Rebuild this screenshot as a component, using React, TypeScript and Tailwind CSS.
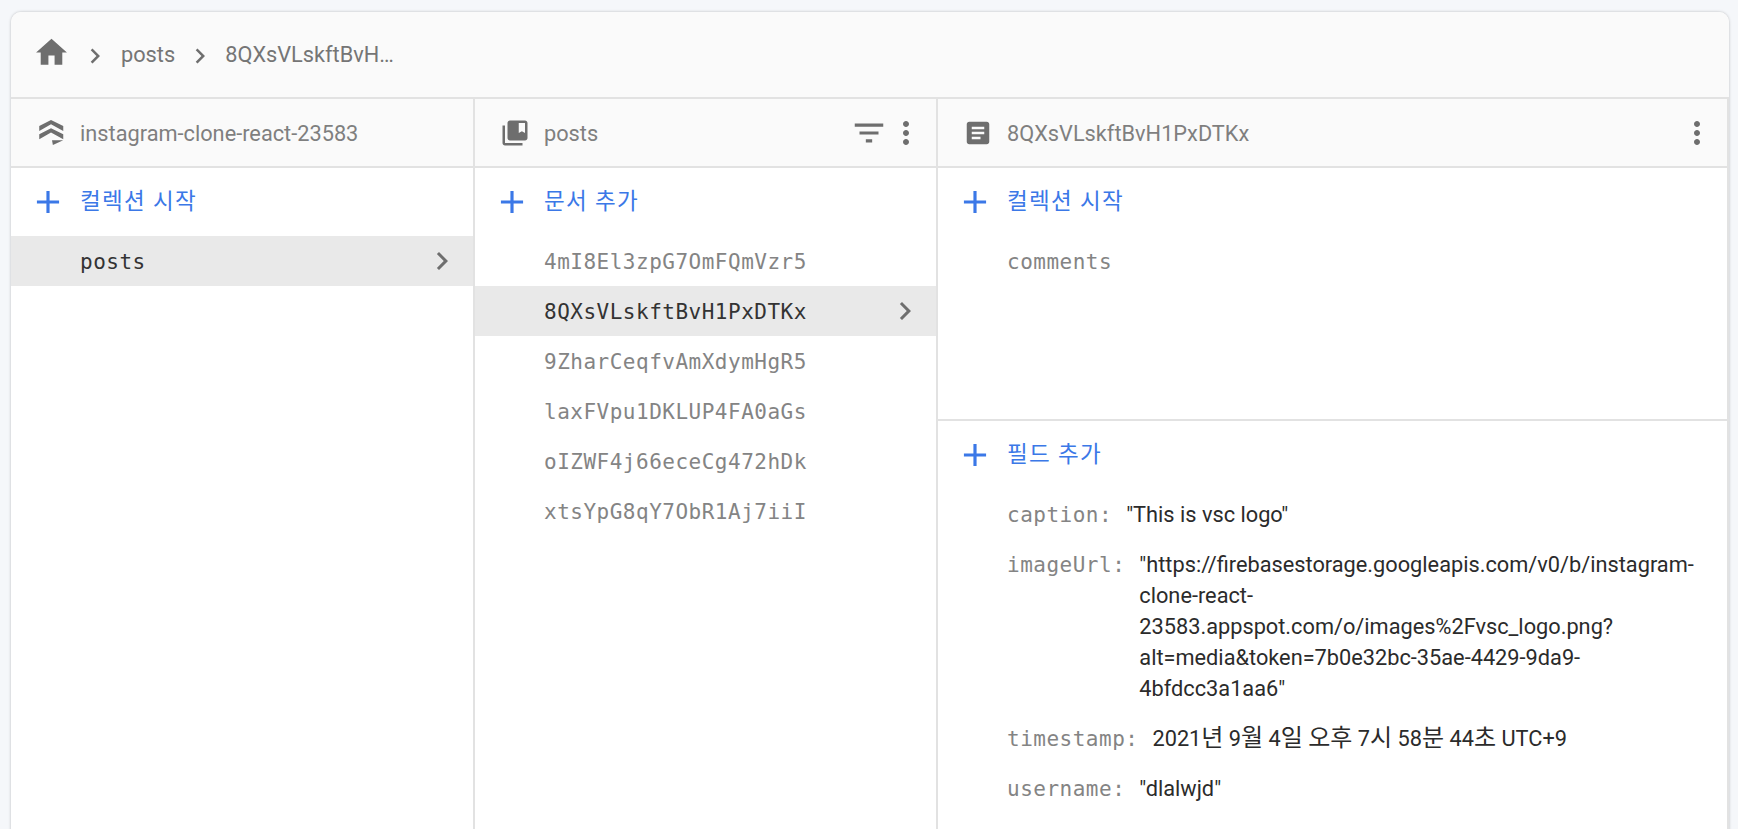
const P = {
  home: "M10 20v-6h4v6h5v-8h3L12 3 2 12h3v8z",
  chev: "M10 6L8.59 7.41 13.17 12l-4.58 4.59L10 18l6-6z",
  add: "M19 13h-6v6h-2v-6H5v-2h6V5h2v6h6v2z",
  more: "M12 8c1.1 0 2-.9 2-2s-.9-2-2-2-2 .9-2 2 .9 2 2 2zm0 2c-1.1 0-2 .9-2 2s.9 2 2 2 2-.9 2-2-.9-2-2-2zm0 6c-1.1 0-2 .9-2 2s.9 2 2 2 2-.9 2-2-.9-2-2-2z",
  filter: "M10 18h4v-2h-4v2zM3 6v2h18V6H3zm3 7h12v-2H6v2z",
  coll: "M4 6H2v14c0 1.1.9 2 2 2h14v-2H4V6zM20 2H8c-1.1 0-2 .9-2 2v12c0 1.1.9 2 2 2h12c1.1 0 2-.9 2-2V4c0-1.1-.9-2-2-2zm0 10l-2.5-1.5L15 12V4h5v8z",
  article: "M19 3H5c-1.1 0-2 .9-2 2v14c0 1.1.9 2 2 2h14c1.1 0 2-.9 2-2V5c0-1.1-.9-2-2-2zm-5 14H7v-2h7v2zm3-4H7v-2h10v2zm0-4H7V7h10v2z",
  stack: "M12 1.6L21.8 6.4V10.4L12 5L2.6 10.4V6.4zM12 8.2L21.8 13V17L12 11.6L2.6 17V13zM12.8 17.8H21.8L13.5 21.5z",
};

function Icon({ d, className }: { d: string; className: string }) {
  return (
    <svg viewBox="0 0 24 24" className={className} fill="currentColor">
      <path d={d} />
    </svg>
  );
}

function ColHeader({ icon, title, right }: { icon: string; title: string; right?: React.ReactNode }) {
  return (
    <div className="h-[69px] shrink-0 flex items-center pl-[25px] pr-[12px] bg-[#fafafa] border-b-2 border-[#e2e2e2]">
      <Icon d={icon} className="w-[30px] h-[30px] text-[#6e6e6e] shrink-0" />
      <span className="ml-[14px] pt-[4px] text-[21.75px] text-[#7f7f7f]">{title}</span>
      <div className="ml-auto flex items-center">{right}</div>
    </div>
  );
}

function AddRow({ label }: { label: string }) {
  return (
    <div className="h-[68px] shrink-0 flex items-center pl-[18px]">
      <Icon d={P.add} className="w-[38px] h-[38px] text-[#3b78e7] shrink-0" />
      <span className="ml-[13px] text-[22.5px] text-[#3b78e7] tracking-[1.3px]">{label}</span>
    </div>
  );
}

const mono = "font-['DejaVu_Sans_Mono',monospace]";

function Row({ label, active }: { label: string; active?: boolean }) {
  return (
    <div className={`h-[50px] flex items-center pl-[69px] pr-[13px] ${active ? "bg-[#e9e9e9] text-[#333]" : "text-[#848484]"}`}>
      <span className={`${mono} pt-[4px] text-[21px] tracking-[0.5px]`}>{label}</span>
      {active && <Icon d={P.chev} className="ml-auto w-[36px] h-[36px] text-[#6e6e6e]" />}
    </div>
  );
}

function Field({ name, children }: { name: string; children: React.ReactNode }) {
  return (
    <div className="flex items-start mb-[19px] pl-[69px] pr-[30px]">
      <span className={`${mono} pt-[2px] text-[21px] leading-[29px] tracking-[0.5px] text-[#848484] shrink-0 mr-[14px]`}>{name}</span>
      <span className="text-[21.75px] leading-[31px] text-[#2b2b2b] break-words min-w-0">{children}</span>
    </div>
  );
}

function Ko({ children }: { children: React.ReactNode }) {
  return <span className="text-[24px] leading-[24px]">{children}</span>;
}

export default function App() {
  return (
    <div className="h-[829px] overflow-hidden bg-[#f5f7fa] pt-[12px] pl-[11px] pr-[9px] font-['Roboto','Noto_Sans_CJK_KR',sans-serif]">
      <div className="h-[900px] bg-white rounded-t-[10px] shadow-[0_0_3px_rgba(0,0,0,0.25)] overflow-hidden flex flex-col">
        <div className="h-[87px] shrink-0 flex items-center bg-[#fafafa] border-b-2 border-[#e2e2e2] pl-[22px] text-[21.75px] text-[#757575]">
          <Icon d={P.home} className="w-[37px] h-[37px] text-[#6e6e6e] shrink-0 mb-[5px]" />
          <Icon d={P.chev} className="ml-[10px] mt-[2px] w-[30px] h-[30px] text-[#6e6e6e] shrink-0" />
          <span className="ml-[11px] pt-[2px]">posts</span>
          <Icon d={P.chev} className="ml-[10px] mt-[2px] w-[30px] h-[30px] text-[#6e6e6e] shrink-0" />
          <span className="ml-[10px] pt-[2px]">8QXsVLskftBvH…</span>
        </div>
        <div className="flex-1 flex">
          <div className="w-[464px] shrink-0 border-r-2 border-[#e2e2e2] flex flex-col">
            <ColHeader icon={P.stack} title="instagram-clone-react-23583" />
            <AddRow label="컬렉션 시작" />
            <Row label="posts" active />
          </div>
          <div className="w-[463px] shrink-0 border-r-2 border-[#e2e2e2] flex flex-col">
            <ColHeader
              icon={P.coll}
              title="posts"
              right={
                <>
                  <Icon d={P.filter} className="w-[38px] h-[38px] text-[#6e6e6e] translate-x-[2px]" />
                  <Icon d={P.more} className="w-[36px] h-[36px] text-[#6e6e6e] ml-[2px]" />
                </>
              }
            />
            <AddRow label="문서 추가" />
            <Row label="4mI8El3zpG7OmFQmVzr5" />
            <Row label="8QXsVLskftBvH1PxDTKx" active />
            <Row label="9ZharCeqfvAmXdymHgR5" />
            <Row label="laxFVpu1DKLUP4FA0aGs" />
            <Row label="oIZWF4j66eceCg472hDk" />
            <Row label="xtsYpG8qY7ObR1Aj7iiI" />
          </div>
          <div className="flex-1 min-w-0 flex flex-col border-r-2 border-[#e2e2e2]">
            <ColHeader
              icon={P.article}
              title="8QXsVLskftBvH1PxDTKx"
              right={<Icon d={P.more} className="w-[36px] h-[36px] text-[#6e6e6e]" />}
            />
            <div className="h-[253px] shrink-0 border-b-2 border-[#e2e2e2]">
              <AddRow label="컬렉션 시작" />
              <Row label="comments" />
            </div>
            <AddRow label="필드 추가" />
            <div className="pt-[10px]">
              <Field name="caption:">"This is vsc logo"</Field>
              <Field name="imageUrl:">
                "https://firebasestorage.googleapis.com/v0/b/instagram-
                <br />
                clone-react-
                <br />
                23583.appspot.com/o/images%2Fvsc_logo.png?
                <br />
                alt=media&token=7b0e32bc-35ae-4429-9da9-
                <br />
                4bfdcc3a1aa6"
              </Field>
              <Field name="timestamp:">
                2021<Ko>년</Ko> 9<Ko>월</Ko> 4<Ko>일</Ko> <Ko>오후</Ko> 7<Ko>시</Ko> 58<Ko>분</Ko> 44<Ko>초</Ko> UTC+9
              </Field>
              <Field name="username:">"dlalwjd"</Field>
            </div>
          </div>
        </div>
      </div>
    </div>
  );
}
